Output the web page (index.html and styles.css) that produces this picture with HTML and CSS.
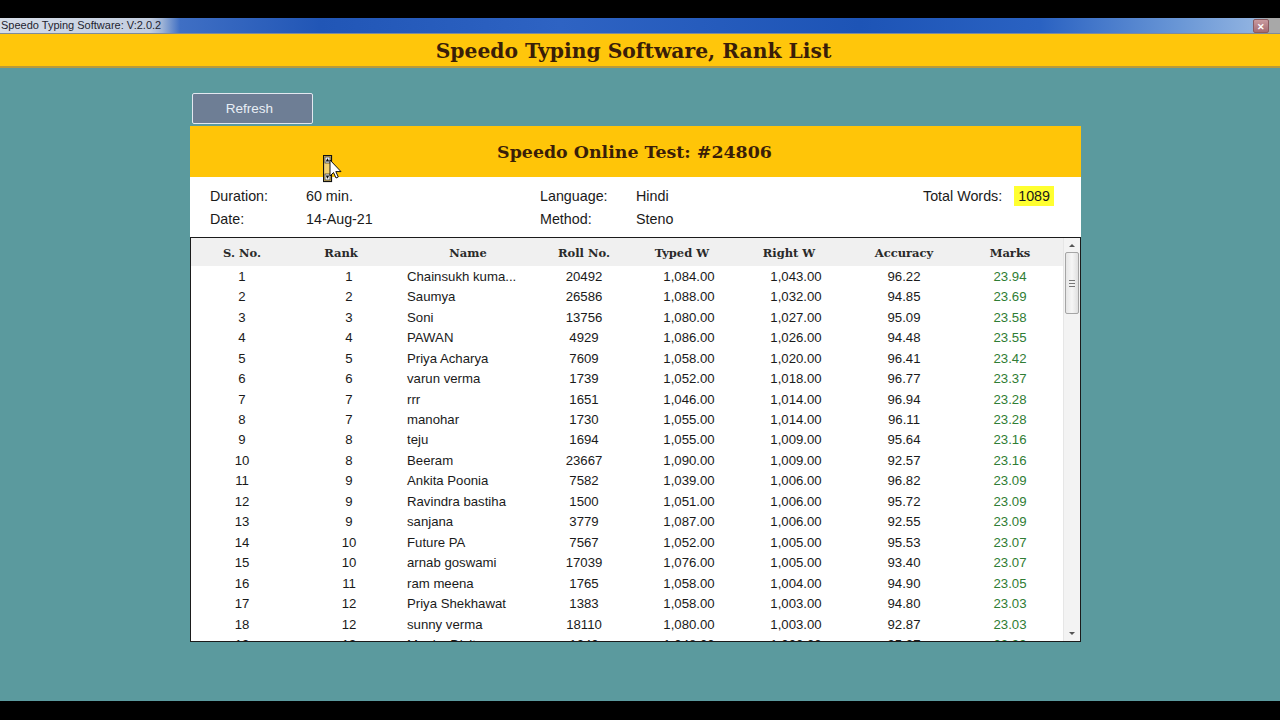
FILE: index.html
```html
<!DOCTYPE html>
<html>
<head>
<meta charset="utf-8">
<title>Speedo Typing Software</title>
<link rel="stylesheet" href="styles.css">
</head>
<body>
<div class="screen">
  <div class="topblack"></div>
  <div class="titlebar">
    <span class="wintitle">Speedo Typing Software: V:2.0.2</span>
    <span class="closebtn">&#x2715;</span>
  </div>
  <div class="appheader">Speedo Typing Software, Rank List</div>
  <main class="main">
    <div class="content">
      <button class="refresh">Refresh</button>
      <section class="panel">
        <div class="panelhead">
          Speedo Online Test: #24806
          <svg class="cursor" width="24" height="30" viewBox="0 0 24 30">
            <rect x="0.5" y="0.5" width="8" height="26" fill="#f3d070" stroke="#111" stroke-width="1.2"/>
            <rect x="2" y="2" width="5" height="6" fill="#eee" stroke="#111" stroke-width="0.6"/>
            <path d="M4.5 3.3 L6.3 6.5 L2.7 6.5 Z" fill="#111"/>
            <rect x="2" y="19" width="5" height="6" fill="#eee" stroke="#111" stroke-width="0.6"/>
            <path d="M4.5 23.7 L6.3 20.5 L2.7 20.5 Z" fill="#111"/>
            <path d="M7 5 L7 21 L10.5 17.5 L13 23 L15.3 22 L12.8 16.6 L18 16.6 Z" fill="#fff" stroke="#111" stroke-width="1"/>
          </svg>
        </div>
        <div class="info">
          <span class="lbl">Duration:</span><span class="val">60 min.</span>
          <span class="lbl">Language:</span><span class="val">Hindi</span>
          <span class="total">Total Words: <span class="hl">1089</span></span>
          <span class="lbl">Date:</span><span class="val">14-Aug-21</span>
          <span class="lbl">Method:</span><span class="val">Steno</span>
          <span></span>
        </div>
        <div class="tablewrap">
          <div class="grid">
            <div class="thead row">
              <span>S. No.</span><span class="h-rank">Rank</span><span class="c-name h-name">Name</span><span>Roll No.</span><span class="h-off">Typed W</span><span class="h-off">Right W</span><span>Accuracy</span><span>Marks</span>
            </div>
            <div class="row"><span>1</span><span>1</span><span class="c-name">Chainsukh kuma...</span><span>20492</span><span>1,084.00</span><span>1,043.00</span><span>96.22</span><span class="mk">23.94</span></div>
            <div class="row"><span>2</span><span>2</span><span class="c-name">Saumya</span><span>26586</span><span>1,088.00</span><span>1,032.00</span><span>94.85</span><span class="mk">23.69</span></div>
            <div class="row"><span>3</span><span>3</span><span class="c-name">Soni</span><span>13756</span><span>1,080.00</span><span>1,027.00</span><span>95.09</span><span class="mk">23.58</span></div>
            <div class="row"><span>4</span><span>4</span><span class="c-name">PAWAN</span><span>4929</span><span>1,086.00</span><span>1,026.00</span><span>94.48</span><span class="mk">23.55</span></div>
            <div class="row"><span>5</span><span>5</span><span class="c-name">Priya Acharya</span><span>7609</span><span>1,058.00</span><span>1,020.00</span><span>96.41</span><span class="mk">23.42</span></div>
            <div class="row"><span>6</span><span>6</span><span class="c-name">varun verma</span><span>1739</span><span>1,052.00</span><span>1,018.00</span><span>96.77</span><span class="mk">23.37</span></div>
            <div class="row"><span>7</span><span>7</span><span class="c-name">rrr</span><span>1651</span><span>1,046.00</span><span>1,014.00</span><span>96.94</span><span class="mk">23.28</span></div>
            <div class="row"><span>8</span><span>7</span><span class="c-name">manohar</span><span>1730</span><span>1,055.00</span><span>1,014.00</span><span>96.11</span><span class="mk">23.28</span></div>
            <div class="row"><span>9</span><span>8</span><span class="c-name">teju</span><span>1694</span><span>1,055.00</span><span>1,009.00</span><span>95.64</span><span class="mk">23.16</span></div>
            <div class="row"><span>10</span><span>8</span><span class="c-name">Beeram</span><span>23667</span><span>1,090.00</span><span>1,009.00</span><span>92.57</span><span class="mk">23.16</span></div>
            <div class="row"><span>11</span><span>9</span><span class="c-name">Ankita Poonia</span><span>7582</span><span>1,039.00</span><span>1,006.00</span><span>96.82</span><span class="mk">23.09</span></div>
            <div class="row"><span>12</span><span>9</span><span class="c-name">Ravindra bastiha</span><span>1500</span><span>1,051.00</span><span>1,006.00</span><span>95.72</span><span class="mk">23.09</span></div>
            <div class="row"><span>13</span><span>9</span><span class="c-name">sanjana</span><span>3779</span><span>1,087.00</span><span>1,006.00</span><span>92.55</span><span class="mk">23.09</span></div>
            <div class="row"><span>14</span><span>10</span><span class="c-name">Future PA</span><span>7567</span><span>1,052.00</span><span>1,005.00</span><span>95.53</span><span class="mk">23.07</span></div>
            <div class="row"><span>15</span><span>10</span><span class="c-name">arnab goswami</span><span>17039</span><span>1,076.00</span><span>1,005.00</span><span>93.40</span><span class="mk">23.07</span></div>
            <div class="row"><span>16</span><span>11</span><span class="c-name">ram meena</span><span>1765</span><span>1,058.00</span><span>1,004.00</span><span>94.90</span><span class="mk">23.05</span></div>
            <div class="row"><span>17</span><span>12</span><span class="c-name">Priya Shekhawat</span><span>1383</span><span>1,058.00</span><span>1,003.00</span><span>94.80</span><span class="mk">23.03</span></div>
            <div class="row"><span>18</span><span>12</span><span class="c-name">sunny verma</span><span>18110</span><span>1,080.00</span><span>1,003.00</span><span>92.87</span><span class="mk">23.03</span></div>
            <div class="row"><span>19</span><span>13</span><span class="c-name">Manku Dixit</span><span>1040</span><span>1,048.00</span><span>1,000.00</span><span>95.07</span><span class="mk">22.99</span></div>
          </div>
          <div class="scrollbar">
            <span class="arrow up"></span>
            <span class="thumb"><i></i><i></i><i></i></span>
            <span class="track"></span>
            <span class="arrow down"></span>
          </div>
        </div>
      </section>
    </div>
  </main>
  <div class="bottomblack"></div>
</div>
</body>
</html>
```
FILE: styles.css
```css
* { box-sizing: border-box; }
html, body { margin: 0; padding: 0; background: #000; }
.screen {
  width: 1280px;
  height: 720px;
  display: flex;
  flex-direction: column;
  overflow: hidden;
  font-family: "Liberation Sans", Arial, sans-serif;
}
.topblack { height: 18px; background: #000; flex: none; }
.titlebar {
  height: 16px;
  flex: none;
  display: flex;
  align-items: center;
  justify-content: space-between;
  border-bottom: 1px solid #7f8b9a;
  background: linear-gradient(90deg, #d6dde8 0, #c3cee0 150px, #9fb4d6 162px, #3f6fc4 180px, #2156b6 320px, #2e63c3 560px, #1d54b6 860px, #2a62c2 1040px, #6a97d6 1180px, #8eb1e0 1250px, #a8a8a8 1268px);
}
.wintitle {
  font-size: 11px;
  color: #1e2430;
  padding-left: 1px;
  line-height: 15px;
}
.closebtn {
  width: 16px;
  height: 14px;
  margin-right: 11px;
  background: linear-gradient(#c99a9f, #a56b72);
  color: #fff;
  font-size: 9px;
  font-weight: bold;
  line-height: 14px;
  text-align: center;
  border: 1px solid #8a5a60;
  border-radius: 2px;
}
.appheader {
  height: 34px;
  flex: none;
  background: #ffc60b;
  border-bottom: 2px solid #b89a3c;
  text-align: center;
  font-family: "DejaVu Serif", "Liberation Serif", serif;
  font-weight: bold;
  font-size: 20.3px;
  line-height: 35px;
  color: #3a1e08;
  padding-right: 13px;
}
.main {
  flex: 1;
  background: #5b9a9e;
  padding: 25px 0 0 190px;
}
.bottomblack { height: 19px; background: #000; flex: none; }
.content {
  width: 891px;
  display: flex;
  flex-direction: column;
  align-items: flex-start;
}
.refresh {
  width: 121px;
  height: 31px;
  margin: 0 0 2px 2px;
  background: #6e7e95;
  border: 1.5px solid #e3e8f0;
  border-radius: 2px;
  color: #e8eef6;
  font-family: "Liberation Sans", Arial, sans-serif;
  font-size: 13.5px;
  padding: 0 6px 0 0;
}
.panel {
  width: 891px;
  background: #fff;
}
.panelhead {
  position: relative;
  height: 51px;
  background: #ffc508;
  text-align: center;
  font-family: "DejaVu Serif", "Liberation Serif", serif;
  font-weight: bold;
  font-size: 17.4px;
  line-height: 52px;
  color: #3a1e08;
  padding-right: 2px;
}
.cursor {
  position: absolute;
  left: 133px;
  top: 29px;
}
.info {
  height: 60px;
  padding: 7px 27px 0 20px;
  display: grid;
  grid-template-columns: 96px 234px 96px 1fr auto;
  grid-auto-rows: 23.5px;
  align-items: center;
  font-size: 14.3px;
  color: #1a1a1a;
}
.total { text-align: right; }
.hl {
  background: #ffff30;
  padding: 2px 4px;
  margin-left: 8px;
}
.tablewrap {
  height: 405px;
  border: 1px solid #1b1b1b;
  display: flex;
  overflow: hidden;
}
.grid {
  width: 872px;
  flex: none;
  display: flex;
  flex-direction: column;
}
.row {
  display: grid;
  grid-template-columns: 102px 112px 126px 106px 104px 110px 106px 106px;
  height: 20.47px;
  align-items: center;
  font-size: 13.2px;
  color: #1a1a1a;
  flex: none;
}
.row span { text-align: center; white-space: nowrap; }
.row .c-name { text-align: left; padding-left: 2px; }
.row .mk { color: #2f7d34; }
.thead {
  height: 28px;
  padding-top: 2px;
  background: #f0f0f0;
  font-family: "DejaVu Serif", "Liberation Serif", serif;
  font-weight: bold;
  font-size: 11.5px;
  color: #2a2a2a;
}
.thead .h-name { text-align: center; padding-left: 0; }
.thead .h-rank { padding-right: 16px; }
.thead .h-off { padding-right: 14px; }
.scrollbar {
  width: 17px;
  flex: none;
  background: #f3f3f3;
  border-left: 1px solid #e6e6e6;
  display: flex;
  flex-direction: column;
  align-items: center;
}
.arrow {
  width: 0;
  height: 0;
  border-left: 3px solid transparent;
  border-right: 3px solid transparent;
  flex: none;
}
.arrow.up { border-bottom: 3px solid #555; margin-top: 6px; }
.arrow.down { border-top: 3px solid #555; margin-bottom: 6px; }
.thumb {
  width: 14px;
  height: 62px;
  margin-top: 5px;
  flex: none;
  border: 1px solid #a5a5a5;
  border-radius: 2px;
  background: linear-gradient(90deg, #e6e6e6, #f6f6f6 50%, #e0e0e0);
  display: flex;
  flex-direction: column;
  align-items: center;
  justify-content: center;
  gap: 2px;
}
.thumb i { display: block; width: 6px; height: 1px; background: #777; }
.track { flex: 1; }
```
